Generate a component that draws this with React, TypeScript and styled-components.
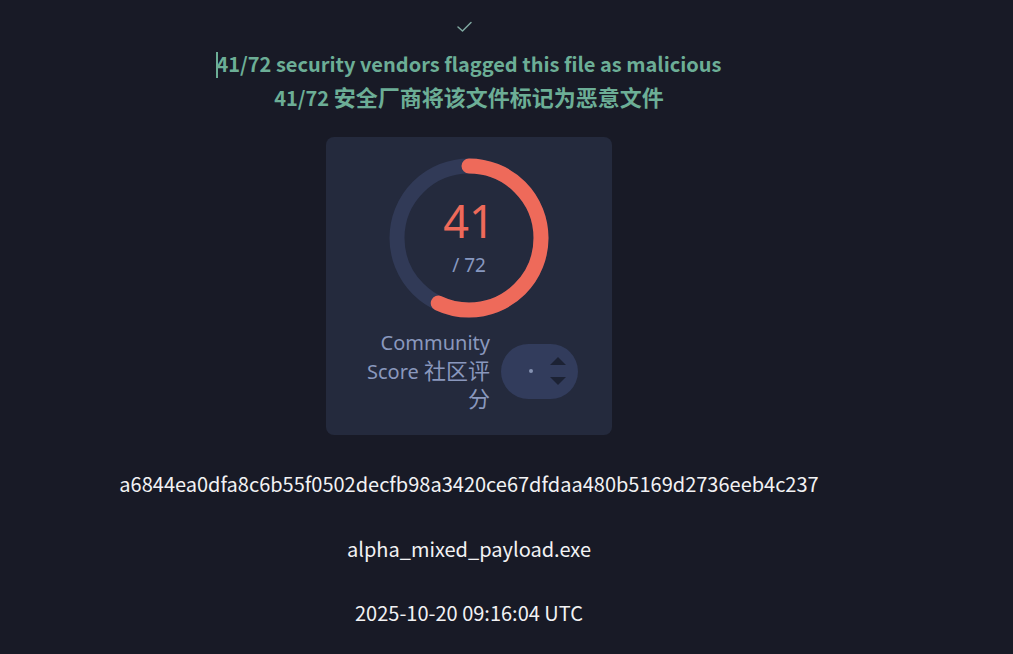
import React from "react";
import styled, { createGlobalStyle } from "styled-components";

const Global = createGlobalStyle`
  html, body { margin: 0; padding: 0; background: #181a26; }
  body { font-family: "Noto Sans CJK SC", "Noto Sans", sans-serif; }
`;

const Page = styled.div`
  width: 938px;
  min-height: 654px;
  display: flex;
  flex-direction: column;
  align-items: center;
  padding-top: 19px;
  box-sizing: border-box;
`;

const Check = styled.svg`
  width: 17px;
  height: 15px;
  margin-left: -10px;
  display: block;
`;

const Heading = styled.h1`
  margin: 14px 0 0;
  font-family: "Noto Sans CJK SC", sans-serif;
  font-weight: 700;
  font-size: 20px;
  line-height: 32px;
  color: #6cae96;
  text-align: center;
`;

const Cjk = styled.span`
  font-size: 1.1em;
  line-height: inherit;
`;

const Caret = styled.span`
  display: inline-block;
  width: 2px;
  height: 26px;
  margin-right: -2px;
  vertical-align: -6px;
  background: #6cae96;
`;

const Card = styled.div`
  margin-top: 23px;
  width: 286px;
  height: 298px;
  box-sizing: border-box;
  background: #242a3d;
  border-radius: 8px;
  padding-top: 21px;
  display: flex;
  flex-direction: column;
  align-items: center;
  font-family: "Noto Sans", sans-serif;
`;

const Gauge = styled.div`
  position: relative;
  width: 160px;
  height: 160px;
`;

const GaugeSvg = styled.svg`
  display: block;
`;

const GaugeCenter = styled.div`
  position: absolute;
  inset: 0;
  display: flex;
  flex-direction: column;
  align-items: center;
  justify-content: center;
`;

const Score = styled.div`
  font-size: 45px;
  line-height: 48px;
  color: #ee6a5a;
  margin-top: -8px;
`;

const Total = styled.div`
  font-size: 19px;
  line-height: 24px;
  color: #8798c0;
  margin-top: 8px;
  margin-bottom: -6px;
`;

const ScoreRow = styled.div`
  margin-top: 11px;
  display: flex;
  align-items: center;
  gap: 11px;
`;

const Label = styled.div`
  width: 130px;
  text-align: right;
  font-size: 20px;
  line-height: 27.5px;
  color: #8a98bd;
  font-family: "Noto Sans", "Noto Sans CJK SC", sans-serif;
`;

const Pill = styled.div`
  width: 77px;
  height: 55px;
  border-radius: 28px;
  background: #323c5c;
  display: flex;
  align-items: center;
  padding-left: 28px;
  box-sizing: border-box;
  gap: 17px;
`;

const Dot = styled.span`
  width: 4px;
  height: 4px;
  border-radius: 50%;
  background: #8592b2;
`;

const Spinner = styled.div`
  display: flex;
  flex-direction: column;
  gap: 12px;
`;

const Tri = styled.span<{ $down?: boolean }>`
  width: 0;
  height: 0;
  border-left: 8px solid transparent;
  border-right: 8px solid transparent;
  ${(p) => (p.$down ? "border-top: 8px solid #1c2234;" : "border-bottom: 8px solid #1c2234;")}
`;

const Info = styled.div<{ $mt: number }>`
  margin-top: ${(p) => p.$mt}px;
  font-size: 20px;
  line-height: 28px;
  color: #f2f2f4;
  text-align: center;
`;

const R = 72;
const C = 2 * Math.PI * R;

export default function App() {
  const frac = 41 / 72;
  return (
    <>
      <Global />
      <Page>
        <Check viewBox="0 0 17 15">
          <path d="M2 8 L6.5 12 L15 3.5" fill="none" stroke="#7fa8a0" strokeWidth="1.5" strokeLinecap="round" strokeLinejoin="round" />
        </Check>
        <Heading>
          <Caret />41/72 security vendors flagged this file as malicious
          <br />
          41/72 <Cjk>安全厂商将该文件标记为恶意文件</Cjk>
        </Heading>
        <Card>
          <Gauge>
            <GaugeSvg width="160" height="160" viewBox="0 0 160 160">
              <circle cx="80" cy="80" r={R} fill="none" stroke="#313a57" strokeWidth="15" />
              <circle
                cx="80"
                cy="80"
                r={R}
                fill="none"
                stroke="#ee6a5a"
                strokeWidth="15"
                strokeLinecap="round"
                strokeDasharray={`${C * frac} ${C}`}
                transform="rotate(-90 80 80)"
              />
            </GaugeSvg>
            <GaugeCenter>
              <Score>41</Score>
              <Total>/ 72</Total>
            </GaugeCenter>
          </Gauge>
          <ScoreRow>
            <Label>
              Community Score <Cjk>社区评分</Cjk>
            </Label>
            <Pill>
              <Dot />
              <Spinner>
                <Tri />
                <Tri $down />
              </Spinner>
            </Pill>
          </ScoreRow>
        </Card>
        <Info $mt={35}>a6844ea0dfa8c6b55f0502decfb98a3420ce67dfdaa480b5169d2736eeb4c237</Info>
        <Info $mt={37}>alpha_mixed_payload.exe</Info>
        <Info $mt={36}>2025-10-20 09:16:04 UTC</Info>
      </Page>
    </>
  );
}
